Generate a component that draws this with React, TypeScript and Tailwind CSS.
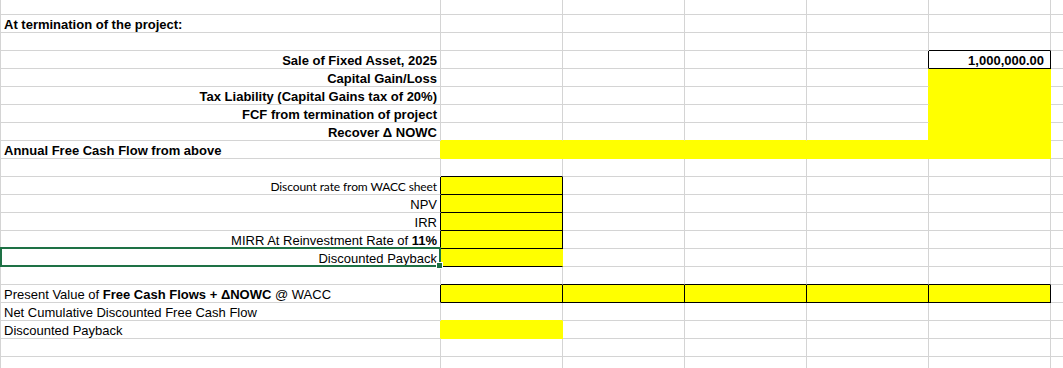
import type { ReactNode } from 'react';

type Cell = {
  text?: ReactNode;
  right?: boolean;
  font?: string;
  fill?: boolean;
  box?: string;
  selected?: boolean;
  pad?: string;
};

const BOLD = "font-['Liberation_Sans',Arial,sans-serif] font-bold text-[13px]";
const ARIAL = "font-['Liberation_Sans',Arial,sans-serif] text-[13px]";
const CALIBRI = "font-['Lato',sans-serif] text-[12px] tracking-[-0.1px]";

const row = (cells: Record<number, Cell> = {}): Cell[] =>
  Array.from({ length: 7 }, (_, i) => cells[i] ?? {});

const yellow: Cell = { fill: true };
const boxed: Cell = { fill: true, box: 'trbl' };

const rows: Cell[][] = [
  row(),
  row({ 0: { text: 'At termination of the project:', font: BOLD } }),
  row(),
  row({
    0: { text: 'Sale of Fixed Asset, 2025', font: BOLD, right: true },
    5: { text: '1,000,000.00', font: BOLD, right: true, box: 'trbl', pad: 'pr-[6px]' },
  }),
  row({ 0: { text: 'Capital Gain/Loss', font: BOLD, right: true }, 5: yellow }),
  row({ 0: { text: 'Tax Liability (Capital Gains tax of 20%)', font: BOLD, right: true }, 5: yellow }),
  row({ 0: { text: 'FCF from termination of project', font: BOLD, right: true }, 5: yellow }),
  row({ 0: { text: 'Recover Δ NOWC', font: BOLD, right: true }, 5: yellow }),
  row({
    0: { text: 'Annual Free Cash Flow from above', font: BOLD },
    1: yellow,
    2: yellow,
    3: yellow,
    4: yellow,
    5: yellow,
  }),
  row(),
  row({ 0: { text: 'Discount rate from WACC sheet', font: CALIBRI, right: true }, 1: boxed }),
  row({ 0: { text: 'NPV', font: ARIAL, right: true }, 1: boxed }),
  row({ 0: { text: 'IRR', font: ARIAL, right: true }, 1: boxed }),
  row({
    0: {
      text: (
        <>
          MIRR At Reinvestment Rate of <b>11%</b>
        </>
      ),
      font: ARIAL,
      right: true,
    },
    1: boxed,
  }),
  row({
    0: { text: 'Discounted Payback', font: ARIAL, right: true, selected: true },
    1: { fill: true, box: 'tbl' },
  }),
  row(),
  row({
    0: {
      text: (
        <>
          Present Value of <b>Free Cash Flows + ΔNOWC</b> @ WACC
        </>
      ),
      font: ARIAL,
    },
    1: boxed,
    2: boxed,
    3: boxed,
    4: boxed,
    5: boxed,
  }),
  row({ 0: { text: 'Net Cumulative Discounted Free Cash Flow', font: ARIAL } }),
  row({ 0: { text: 'Discounted Payback', font: ARIAL }, 1: yellow }),
  row(),
  row(),
];

const edgeR = (r: number, c: number) => {
  const a = rows[r][c];
  const b = rows[r][c + 1];
  if (!b) return 'border-r-0';
  if (a.box?.includes('r') || b.box?.includes('l')) return 'border-r border-r-black';
  if (a.fill || b.fill) return 'border-r border-r-[#ffff00]';
  return 'border-r border-r-[#d4d4d4]';
};

const edgeB = (r: number, c: number) => {
  const a = rows[r][c];
  const b = rows[r + 1]?.[c] ?? {};
  if (a.box?.includes('b') || b.box?.includes('t')) return 'border-b border-b-black';
  if (a.fill || b.fill) return 'border-b border-b-[#ffff00]';
  return 'border-b border-b-[#d4d4d4]';
};

export default function App() {
  return (
    <div className="h-[368px] w-[1063px] overflow-hidden bg-white text-black">
      <div className="grid grid-cols-[441px_122px_122px_122px_122px_122px_1fr]">
        {rows.map((cells, r) =>
          cells.map((cell, c) => (
            <div
              key={`${r}-${c}`}
              className={[
                'relative flex items-center whitespace-nowrap leading-[17px]',
                r === 0 ? 'h-[15px]' : 'h-[18px]',
                c === 0 ? 'border-l border-l-[#d4d4d4]' : '',
                cell.right ? 'justify-end' : 'justify-start',
                cell.pad ?? 'px-[3px]',
                cell.fill ? 'bg-[#ffff00]' : '',
                cell.font ?? '',
                edgeR(r, c),
                edgeB(r, c),
              ].join(' ')}
            >
              {cell.text && <span className="pt-px">{cell.text}</span>}
              {cell.selected && (
                <div className="absolute -top-[2px] -left-px -right-px -bottom-px z-10 border-2 border-[#1e7145]">
                  <div className="absolute -right-[4px] -bottom-[4px] h-[7px] w-[7px] border border-white bg-[#1e7145]" />
                </div>
              )}
            </div>
          )),
        )}
      </div>
    </div>
  );
}
